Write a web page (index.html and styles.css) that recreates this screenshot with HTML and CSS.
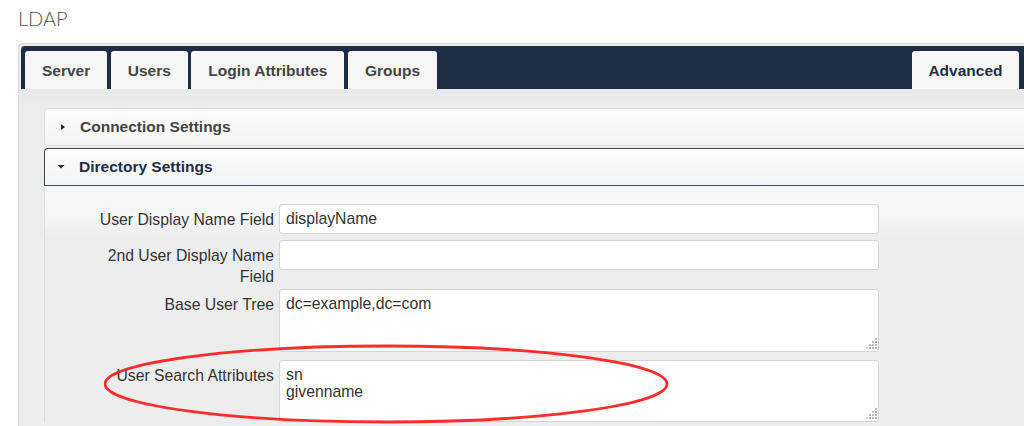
FILE: index.html
```html
<!DOCTYPE html>
<html lang="en">
<head>
<meta charset="utf-8">
<title>LDAP</title>
<link rel="stylesheet" href="styles.css">
</head>
<body>
<div class="page">
  <h1 class="title">LDAP</h1>
  <div class="settings-box">
    <div class="tabbar">
      <div class="tab">Server</div>
      <div class="tab">Users</div>
      <div class="tab">Login Attributes</div>
      <div class="tab">Groups</div>
      <div class="tab tab-active">Advanced</div>
    </div>
    <div class="tab-content">
      <div class="acc-header">
        <svg class="arrow" width="6" height="8" viewBox="0 0 6 8"><path d="M1 1 L5 4 L1 7 Z" fill="#222"/></svg>
        <span>Connection Settings</span>
      </div>
      <div class="acc-header acc-open">
        <svg class="arrow" width="8" height="6" viewBox="0 0 8 6"><path d="M0.5 1 L7.5 1 L4 4.5 Z" fill="#1f2d45"/></svg>
        <span>Directory Settings</span>
      </div>
      <div class="acc-body">
        <div class="form">
          <label class="lbl">User Display Name Field</label>
          <div class="field"><input class="inp" type="text" value="displayName"></div>

          <label class="lbl">2nd User Display Name Field</label>
          <div class="field"><input class="inp" type="text" value=""></div>

          <label class="lbl">Base User Tree</label>
          <div class="field ta-wrap">
            <textarea class="ta">dc=example,dc=com</textarea>
            <svg class="grip" width="12" height="12" viewBox="0 0 12 12"><rect x="10" y="0" width="2" height="2"/><rect x="7" y="3" width="2" height="2"/><rect x="10" y="3" width="2" height="2"/><rect x="4" y="6" width="2" height="2"/><rect x="7" y="6" width="2" height="2"/><rect x="10" y="6" width="2" height="2"/><rect x="1" y="9" width="2" height="2" opacity="0.5"/><rect x="4" y="9" width="2" height="2"/><rect x="7" y="9" width="2" height="2"/><rect x="10" y="9" width="2" height="2"/></svg>
          </div>

          <label class="lbl">User Search Attributes</label>
          <div class="field ta-wrap ta-last">
            <textarea class="ta ta-short">sn
givenname</textarea>
            <svg class="grip" width="12" height="12" viewBox="0 0 12 12"><rect x="10" y="0" width="2" height="2"/><rect x="7" y="3" width="2" height="2"/><rect x="10" y="3" width="2" height="2"/><rect x="4" y="6" width="2" height="2"/><rect x="7" y="6" width="2" height="2"/><rect x="10" y="6" width="2" height="2"/><rect x="1" y="9" width="2" height="2" opacity="0.5"/><rect x="4" y="9" width="2" height="2"/><rect x="7" y="9" width="2" height="2"/><rect x="10" y="9" width="2" height="2"/></svg>
          </div>
        </div>
      </div>
    </div>
  </div>
  <svg class="annotation" width="600" height="86" viewBox="0 0 600 86">
    <ellipse cx="282" cy="45" rx="281" ry="38" fill="none" stroke="#ff1a1a" stroke-width="2.8" opacity="0.92"/>
  </svg>
</div>
</body>
</html>
```
FILE: styles.css
```css
html, body {
  margin: 0;
  padding: 0;
  background: #ffffff;
  overflow: hidden;
}

body {
  font-family: "Liberation Sans", Arial, sans-serif;
  color: #333;
  width: 1024px;
  height: 426px;
}

.page {
  position: relative;
  padding-left: 18px;
  height: 426px;
  overflow: hidden;
}

.title {
  margin: 0;
  padding-top: 6px;
  height: 43px;
  box-sizing: border-box;
  font-family: Lato, "Open Sans", sans-serif;
  font-weight: 300;
  font-size: 20px;
  line-height: 24px;
  color: #555;
}

.settings-box {
  width: 1006px;
  height: 383px;
  border: 1px solid #dcdcdc;
  border-bottom: none;
  border-right: none;
  border-radius: 4px 0 0 0;
  background: #ededed;
  box-sizing: border-box;
  overflow: hidden;
}

.tabbar {
  margin: 2px 0 0 2px;
  height: 43px;
  box-sizing: border-box;
  padding: 5px 5px 0 4px;
  background: #1f2d45;
  border-radius: 4px 0 0 0;
  display: flex;
  align-items: flex-end;
  gap: 3.5px;
}

.tab {
  height: 38px;
  box-sizing: border-box;
  padding: 0 17px;
  background: #f6f6f6;
  border-radius: 3px 3px 0 0;
  font-size: 15.5px;
  font-weight: bold;
  color: #444;
  line-height: 39px;
  white-space: nowrap;
}

.tab-active {
  margin-left: auto;
  padding: 0 16.5px;
  color: #1f2d45;
  background: #f8f8f8;
}

.tab-content {
  padding: 19px 0 0 25px;
  background: linear-gradient(to bottom, #e9e9e9 0, #ededed 18px);
}

.acc-header {
  height: 38px;
  box-sizing: border-box;
  border: 1px solid #dddddd;
  border-right: none;
  border-radius: 4px 0 0 4px;
  background: linear-gradient(to bottom, #fbfbfb, #f5f5f5);
  display: flex;
  align-items: center;
  padding-left: 15px;
  font-size: 15.5px;
  font-weight: bold;
  color: #444;
}

.acc-header .arrow {
  width: 6px;
  margin-right: 14px;
  flex: none;
}

.acc-open {
  margin-top: 2px;
  border-color: #3a475c;
  border-radius: 4px 0 0 0;
  color: #1f2d45;
  padding-left: 12px;
}

.acc-open .arrow {
  width: 8px;
  margin-right: 14px;
}

.acc-body {
  border-left: 1px solid #dddddd;
  background: linear-gradient(to bottom, #f8f8f8 0, #f5f5f5 32px, #ededed 52px);
}

.form {
  display: grid;
  grid-template-columns: 185px 600px;
  column-gap: 5px;
  padding: 18px 0 0 44px;
  align-items: start;
}

.lbl {
  text-align: right;
  font-size: 15.75px;
  line-height: 21px;
  padding-top: 5px;
  padding-bottom: 2px;
  color: #333;
}

.field {
  margin-bottom: 6px;
}

.inp {
  display: block;
  width: 600px;
  height: 30px;
  box-sizing: border-box;
  margin: 0;
  padding: 4px 6px;
  border: 1px solid #d6d6d6;
  border-radius: 3px;
  background: #fff;
  font-family: "Liberation Sans", Arial, sans-serif;
  font-size: 15.75px;
  color: #333;
  outline: none;
}

.ta-wrap {
  position: relative;
  margin-bottom: 8px;
}

.ta-last {
  margin-bottom: 0;
}

.ta {
  display: block;
  width: 600px;
  height: 63px;
  box-sizing: border-box;
  margin: 0;
  padding: 5px 6px;
  border: 1px solid #d6d6d6;
  border-radius: 3px;
  background: #fff;
  font-family: "Liberation Sans", Arial, sans-serif;
  font-size: 15.75px;
  line-height: 17px;
  color: #333;
  resize: none;
  overflow: hidden;
  outline: none;
}

.ta-short {
  height: 62px;
}

.grip {
  position: absolute;
  right: 2px;
  bottom: 2px;
  fill: #bdbdbd;
}

.annotation {
  position: absolute;
  left: 104px;
  top: 339px;
  pointer-events: none;
}
```
